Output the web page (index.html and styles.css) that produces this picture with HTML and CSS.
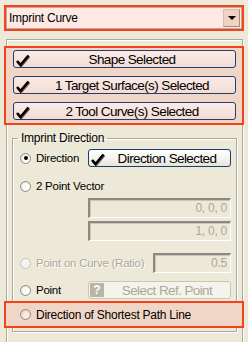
FILE: index.html
```html
<!DOCTYPE html>
<html lang="en">
<head>
  <meta charset="UTF-8">
  <title>Imprint Curve</title>
  <link rel="stylesheet" href="styles.css">
</head>
<body>

<div class="hl combo-hl">
  <div class="combo">
    <span class="combo-text">Imprint Curve</span>
    <span class="combo-btn"><span class="arrow"></span></span>
  </div>
</div>

<div class="panel">
  <div class="hl sel-box">
    <button class="sel-btn">
      <svg class="check" width="15" height="13" viewBox="0 0 15 13"><path d="M2 7 L5.5 11 L13.5 1.5" fill="none" stroke="#8a6050" stroke-width="2.6" transform="translate(0.8,0.8)"/><path d="M2 7 L5.5 11 L13.5 1.5" fill="none" stroke="#000" stroke-width="2.6"/></svg>
      <span class="sel-text">Shape Selected</span>
    </button>
    <button class="sel-btn">
      <svg class="check" width="15" height="13" viewBox="0 0 15 13"><path d="M2 7 L5.5 11 L13.5 1.5" fill="none" stroke="#8a6050" stroke-width="2.6" transform="translate(0.8,0.8)"/><path d="M2 7 L5.5 11 L13.5 1.5" fill="none" stroke="#000" stroke-width="2.6"/></svg>
      <span class="sel-text">1 Target Surface(s) Selected</span>
    </button>
    <button class="sel-btn">
      <svg class="check" width="15" height="13" viewBox="0 0 15 13"><path d="M2 7 L5.5 11 L13.5 1.5" fill="none" stroke="#8a6050" stroke-width="2.6" transform="translate(0.8,0.8)"/><path d="M2 7 L5.5 11 L13.5 1.5" fill="none" stroke="#000" stroke-width="2.6"/></svg>
      <span class="sel-text">2 Tool Curve(s) Selected</span>
    </button>
  </div>

  <fieldset class="group">
    <legend>Imprint Direction</legend>

    <div class="row row-dir">
      <span class="radio checked"></span>
      <span class="label">Direction</span>
      <button class="sel-btn plain-btn">
        <svg class="check" width="15" height="13" viewBox="0 0 15 13"><path d="M2 7 L5.5 11 L13.5 1.5" fill="none" stroke="#777" stroke-width="2.6" transform="translate(0.8,0.8)"/><path d="M2 7 L5.5 11 L13.5 1.5" fill="none" stroke="#000" stroke-width="2.6"/></svg>
        <span class="sel-text">Direction Selected</span>
      </button>
    </div>

    <div class="row row-2pt">
      <span class="radio"></span>
      <span class="label">2 Point Vector</span>
    </div>

    <div class="field wide first">0, 0, 0</div>
    <div class="field wide">1, 0, 0</div>

    <div class="row row-poc">
      <span class="radio disabled"></span>
      <span class="label dim">Point on Curve (Ratio)</span>
      <div class="field short">0.5</div>
    </div>

    <div class="row row-point">
      <span class="radio"></span>
      <span class="label">Point</span>
      <button class="ref-btn">
        <span class="q">?</span>
        <span class="ref-text">Select Ref. Point</span>
      </button>
    </div>

    <div class="hl row path-box">
      <span class="radio pink"></span>
      <span class="label">Direction of Shortest Path Line</span>
    </div>
  </fieldset>
</div>

</body>
</html>
```

FILE: styles.css
```css
body {
  margin: 0;
  padding-top: 5px;
  background: #ece9d8;
  font-family: "Liberation Sans", Arial, sans-serif;
  font-size: 11.5px;
  letter-spacing: -0.25px;
  color: #000;
}
.hl {
  border: 2px solid #f8401a;
  background: #efd6c6;
}
.combo-hl {
  margin: 0 4px;
  height: 22px;
  background: #ece9d8;
}
.combo {
  height: 22px;
  box-sizing: border-box;
  border: 1px solid #b8aca2;
  background: #ffe9e4;
  display: flex;
  align-items: center;
  padding-left: 2px;
  font-size: 12px;
}
.combo-btn {
  margin-left: auto;
  margin-right: 1px;
  width: 17px;
  height: 18px;
  box-sizing: border-box;
  background: #efd2c2;
  border: 1px solid #d8bcae;
  border-right-color: #a88c7e;
  border-bottom-color: #a88c7e;
  display: flex;
  align-items: center;
  justify-content: center;
}
.arrow {
  width: 0;
  height: 0;
  border-left: 4px solid transparent;
  border-right: 4px solid transparent;
  border-top: 4px solid #000;
}
.panel {
  margin: 8px 5px 0 6px;
  height: 297px;
  border: 1px solid #aca899;
  box-shadow: inset 1px 1px 0 #fff, 1px 1px 0 #fff;
  padding-top: 6px;
}
.sel-box {
  margin: 0 -2px 0 -3px;
  padding: 2px 6px 3px 7px;
  display: flex;
  flex-direction: column;
  gap: 8px;
}
.sel-btn {
  height: 18px;
  padding: 0 0 0 1px;
  border: 1px solid #1f3f72;
  border-radius: 3px;
  background: linear-gradient(#fbeae6, #f4dcd4);
  display: flex;
  align-items: center;
  font-family: inherit;
  font-size: 13.5px;
  letter-spacing: -0.6px;
  color: #000;
}
.check {
  flex: none;
  margin-top: 2px;
}
.sel-text {
  flex: 1;
  text-align: center;
  padding-right: 1px;
}
.plain-btn {
  width: 143px;
  margin-left: auto;
  background: linear-gradient(#ffffff, #f3f2ec 60%, #e6e3d6);
  border-color: #1d3c70;
}
.group {
  margin: 6px 5px 0 5px;
  padding: 3px 5px 1px 7px;
  border: 1px solid #aca899;
  box-shadow: inset 1px 1px 0 #fff, 1px 1px 0 #fff;
  min-width: 0;
}
.group legend {
  margin-left: -2px;
  padding: 0 3px;
  line-height: 15px;
  font-size: 12px;
}
.row {
  display: flex;
  align-items: center;
  white-space: nowrap;
}
.row-dir {
  height: 18px;
}
.row-2pt {
  height: 18px;
  margin-top: 10px;
}
.radio {
  width: 11px;
  height: 11px;
  box-sizing: border-box;
  border-radius: 50%;
  border: 1px solid #8e8c80;
  background: radial-gradient(circle at 60% 60%, #fff 30%, #dcdad0 100%);
  margin-right: 5px;
  flex: none;
  display: flex;
  align-items: center;
  justify-content: center;
}
.radio.checked::after {
  content: "";
  width: 4px;
  height: 4px;
  border-radius: 50%;
  background: #000;
}
.radio.disabled {
  border-color: #c4c2b8;
  background: #f4f3ee;
}
.radio.pink {
  background: radial-gradient(circle at 60% 60%, #fde8e4 30%, #dcc4b8 100%);
}
.label.dim {
  color: #aca899;
  text-shadow: 1px 1px 0 #fff;
}
.field {
  height: 20px;
  box-sizing: border-box;
  border: 2px solid #8c8a80;
  border-right: 1px solid #fff;
  border-bottom: 1px solid #fff;
  box-shadow: inset 1px 1px 0 #c8c6ba;
  color: #aca899;
  text-align: right;
  padding-right: 3px;
  line-height: 17px;
  font-size: 12px;
}
.field.wide {
  width: 143px;
  margin-left: 68px;
  margin-top: 3px;
}
.row-poc {
  margin-top: 12px;
  height: 20px;
}
.field.short {
  width: 78px;
  margin-left: auto;
}
.row-point {
  margin-top: 8px;
  height: 18px;
}
.ref-btn {
  width: 143px;
  height: 18px;
  margin-left: auto;
  padding: 0 0 0 1px;
  border: 1px solid #c9c7ba;
  border-radius: 3px;
  background: #f5f4ec;
  display: flex;
  align-items: center;
  font-family: inherit;
  font-size: 13.5px;
  letter-spacing: -0.6px;
}
.q {
  width: 14px;
  height: 14px;
  background: #b8b5a6;
  color: #fff;
  font-weight: bold;
  font-size: 12px;
  line-height: 14px;
  text-align: center;
  letter-spacing: 0;
}
.ref-text {
  flex: 1;
  text-align: center;
  color: #aca899;
}
.path-box {
  margin: 2px -13px 2px -16px;
  height: 23px;
  padding-left: 14px;
  font-size: 12px;
}
```
